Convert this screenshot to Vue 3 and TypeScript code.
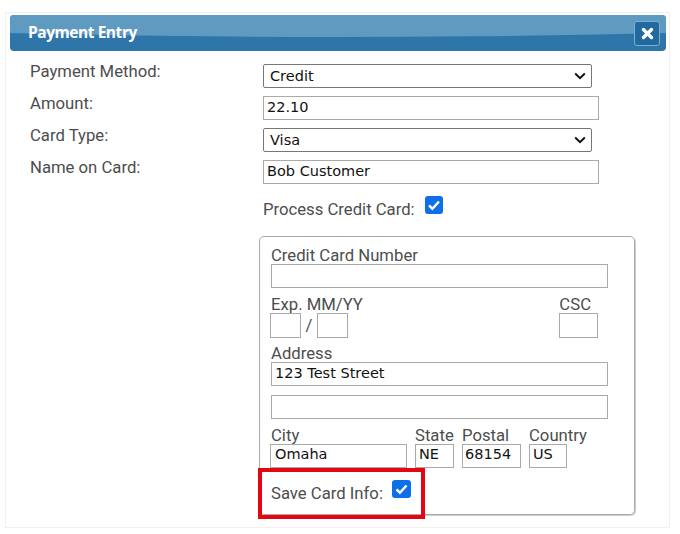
<script setup lang="ts">
const topRows = [
  { label: 'Payment Method:', kind: 'select', value: 'Credit' },
  { label: 'Amount:', kind: 'input', value: '22.10' },
  { label: 'Card Type:', kind: 'select', value: 'Visa' },
  { label: 'Name on Card:', kind: 'input', value: 'Bob Customer' },
]
</script>

<template>
  <div class="dialog">
    <header class="titlebar">
      <span class="title">Payment Entry</span>
      <button class="close" type="button" aria-label="Close">
        <svg width="13" height="13" viewBox="0 0 13 13">
          <path d="M2.5 2.5 10.5 10.5M10.5 2.5 2.5 10.5" stroke="#fff" stroke-width="3.4" stroke-linecap="round" fill="none" />
        </svg>
      </button>
    </header>

    <div class="form">
      <div v-for="row in topRows" :key="row.label" class="row">
        <span class="label">{{ row.label }}</span>
        <div v-if="row.kind === 'select'" class="select">
          <span>{{ row.value }}</span>
          <svg width="12" height="8" viewBox="0 0 12 8">
            <path d="M1.2 1.5 6 6.2 10.8 1.5" stroke="#111" stroke-width="2" fill="none" />
          </svg>
        </div>
        <div v-else class="input wide">{{ row.value }}</div>
      </div>

      <div class="process">
        <span>Process Credit Card:</span>
        <span class="check">
          <svg width="18" height="18" viewBox="0 0 18 18">
            <path d="M4 9.3 7.4 12.7 14 5.5" stroke="#fff" stroke-width="2.4" fill="none" />
          </svg>
        </span>
      </div>

      <section class="card">
        <div class="cap">Credit Card Number</div>
        <div class="input full"></div>

        <div class="exp-head">
          <span class="cap">Exp. MM/YY</span>
          <span class="cap">CSC</span>
        </div>
        <div class="exp-fields">
          <div class="input mm"></div>
          <span class="slash">/</span>
          <div class="input mm"></div>
          <div class="input csc"></div>
        </div>

        <div class="cap addr">Address</div>
        <div class="input full">123 Test Street</div>
        <div class="input full second"></div>

        <div class="city-grid">
          <div class="cell"><span class="cap">City</span><div class="input city">Omaha</div></div>
          <div class="cell"><span class="cap">State</span><div class="input state">NE</div></div>
          <div class="cell"><span class="cap">Postal</span><div class="input postal">68154</div></div>
          <div class="cell"><span class="cap">Country</span><div class="input country">US</div></div>
        </div>

        <div class="save">
          <span>Save Card Info:</span>
          <span class="check big">
            <svg width="19" height="18" viewBox="0 0 18 18">
              <path d="M4 9.3 7.4 12.7 14 5.5" stroke="#fff" stroke-width="2.4" fill="none" />
            </svg>
          </span>
        </div>
      </section>
    </div>

    <div class="highlight"></div>
  </div>
</template>

<style scoped>
.dialog {
  position: relative;
  box-sizing: border-box;
  width: 665px;
  height: 516px;
  margin: 12px 0 0 5px;
  padding: 2px 3px 0 4px;
  border: 1px solid #f1f1f1;
  font-family: Roboto, "Liberation Sans", sans-serif;
  font-size: 16.7px;
  color: #4d4d4d;
  background: #fff;
}
.titlebar {
  position: relative;
  overflow: hidden;
  box-sizing: border-box;
  display: flex;
  align-items: center;
  justify-content: space-between;
  height: 36px;
  padding: 0 6px 0 18px;
  border-radius: 4px;
  background: #2e75a9;
}
.titlebar::before {
  content: "";
  position: absolute;
  left: -1000px;
  right: -1000px;
  top: -240px;
  height: 262px;
  border-radius: 50%;
  background: #5f9bc1;
}
.title {
  position: relative;
  top: -1px;
  font-family: "Open Sans", "Liberation Sans", sans-serif;
  font-size: 15.5px;
  font-weight: 700;
  letter-spacing: -0.45px;
  color: #fff;
}
.close {
  position: relative;
  display: flex;
  align-items: center;
  justify-content: center;
  box-sizing: border-box;
  width: 26px;
  height: 25px;
  padding: 0;
  border: 1px solid #7fb0d0;
  border-radius: 3px;
  background: #22699f;
}
.form {
  padding: 13px 0 0 20px;
}
.row {
  display: flex;
  height: 32px;
}
.label {
  width: 233px;
  line-height: 16px;
}
.select {
  box-sizing: border-box;
  display: flex;
  align-items: center;
  justify-content: space-between;
  width: 329px;
  height: 24px;
  padding: 0 5px 0 6px;
  border: 1px solid #777;
  border-radius: 2px;
  font-family: "DejaVu Sans", sans-serif;
  font-size: 14.5px;
  color: #111;
}
.input {
  box-sizing: border-box;
  height: 24px;
  padding: 0 3px;
  border: 1px solid #aaa;
  font-family: "DejaVu Sans", sans-serif;
  font-size: 14.5px;
  line-height: 20px;
  color: #111;
}
.wide {
  width: 336px;
}
.process {
  display: flex;
  align-items: flex-start;
  gap: 10px;
  height: 39px;
  margin: 5px 0 0 233px;
  line-height: 20px;
}
.process > span:first-child {
  margin-top: 3px;
}
.check {
  position: relative;
  top: -1px;
  display: block;
  width: 18px;
  height: 18px;
  border-radius: 3px;
  background: #0f6fe8;
}
.check.big {
  width: 19px;
  top: -2px;
}
.check svg {
  display: block;
}
.card {
  box-sizing: border-box;
  width: 376px;
  height: 279px;
  margin-left: 229px;
  padding: 9px 11px 0;
  border: 1px solid #aaa;
  border-radius: 5px;
  box-shadow: 1px 1px 0 #ccc;
}
.cap {
  display: block;
  position: relative;
  top: 1px;
  height: 18px;
  line-height: 18px;
}
.full {
  width: 337px;
}
.exp-head {
  display: flex;
  justify-content: space-between;
  width: 320px;
  margin-top: 7px;
}
.exp-fields {
  display: flex;
  align-items: center;
  margin-left: -1px;
}
.mm {
  width: 31px;
  height: 25px;
}
.slash {
  width: 16px;
  text-align: center;
}
.csc {
  width: 39px;
  height: 25px;
  margin-left: 211px;
}
.addr {
  margin-top: 6px;
}
.second {
  margin-top: 9px;
}
.city-grid {
  display: flex;
  gap: 8px;
  margin: 7px 0 0 -1px;
}
.cell {
  display: flex;
  flex-direction: column;
}
.cell:first-child .cap {
  margin-left: 1px;
}
.city { width: 137px; padding-left: 4px; }
.state { width: 39px; }
.postal { width: 59px; padding-left: 2px; }
.country { width: 38px; }
.cell .input {
  white-space: nowrap;
  line-height: 19px;
}
.cell .cap {
  white-space: nowrap;
}
.save {
  display: flex;
  align-items: flex-start;
  gap: 9px;
  margin-top: 13px;
  line-height: 20px;
}
.save > span:first-child {
  margin-top: 3px;
}
.check.big {
  top: -1px;
}
.highlight {
  position: absolute;
  left: 252px;
  top: 455px;
  box-sizing: border-box;
  width: 167px;
  height: 51px;
  border: 4px solid #e30613;
  pointer-events: none;
}
</style>
